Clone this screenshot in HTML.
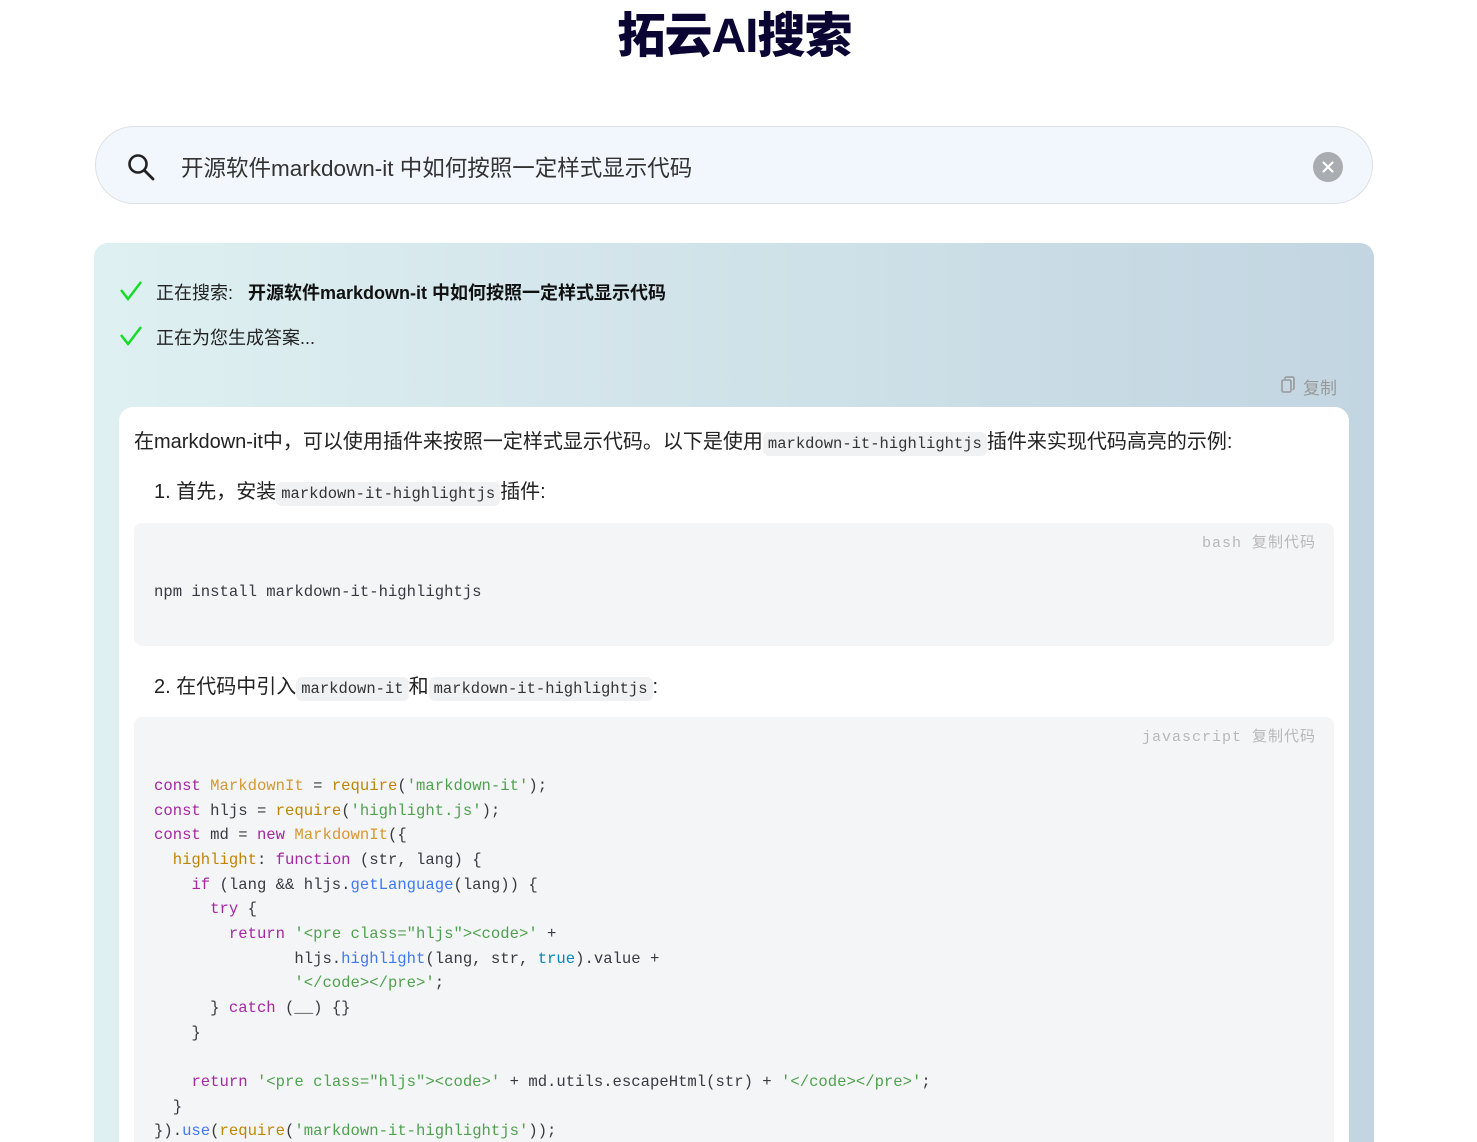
<!DOCTYPE html>
<html style="overflow:hidden;height:1142px"><head><meta charset="utf-8">
<style>
*{margin:0;padding:0;box-sizing:border-box}
body{width:1477px;height:1142px;overflow:hidden;background:#fff;font-family:"Liberation Sans","Noto Sans CJK SC",sans-serif;position:relative;color:#222}
.abs{position:absolute}
h1{position:absolute;left:0;width:1469px;text-align:center;top:-4px;font-size:48px;font-weight:900;color:#0b0533;letter-spacing:-1px}
.search{left:95px;top:126px;width:1278px;height:78px;border:1px solid #dcdfe3;border-radius:40px;background:#f2f7fd}
.search .q{position:absolute;left:85px;top:24px;font-size:22.5px;color:#333}
.clear{position:absolute;left:1217px;top:25px;width:30px;height:30px;border-radius:50%;background:#a9acb0}
.panel{left:94px;top:243px;width:1280px;height:899px;border-radius:14px 14px 0 0;background:linear-gradient(90deg,#def0f1 0%,#c2d5e1 100%);overflow:hidden}
.st{position:absolute;left:62px;font-size:18px;color:#222}
.card{left:119px;top:407px;width:1230px;height:735px;background:#fff;border-radius:14px 14px 0 0;overflow:hidden}
.p{position:absolute;font-size:20px;color:#222;white-space:nowrap}
code.i{font-family:"Liberation Mono",monospace;font-size:15.5px;background:#f0f1f3;border-radius:6px;padding:3px 5px;color:#333}
.cb{position:absolute;left:15px;width:1200px;background:#f4f5f7;border-radius:8px}
.lang{position:absolute;right:18px;top:8px;font-family:"Liberation Mono","Noto Sans CJK SC",monospace;font-size:15px;color:#b8b8b8;letter-spacing:1px}
pre{position:absolute;left:20px;font-family:"Liberation Mono",monospace;font-size:15.6px;line-height:24.65px;color:#383a42}
.k{color:#a626a4}.s{color:#50a14f}.b{color:#c18401}.t{color:#d7962f}.f{color:#4078f2}.l{color:#0184bb}
</style></head><body>
<h1>拓云AI搜索</h1>
<div class="abs search">
<svg style="position:absolute;left:30px;top:25px" width="30" height="30" viewBox="0 0 30 30"><circle cx="12" cy="12" r="8.5" fill="none" stroke="#222" stroke-width="2.6"/><line x1="18.5" y1="18.5" x2="27" y2="27" stroke="#222" stroke-width="2.8" stroke-linecap="round"/></svg>
<div class="q">开源软件markdown-it 中如何按照一定样式显示代码</div>
<div class="clear"><svg width="30" height="30" viewBox="0 0 30 30"><path d="M10.5 10.5L19.5 19.5M19.5 10.5L10.5 19.5" stroke="#fff" stroke-width="2.2" stroke-linecap="round"/></svg></div>
</div>
<div class="abs panel">
<svg style="position:absolute;left:25px;top:37px" width="24" height="22" viewBox="0 0 24 22"><path d="M2 10L9 19L22 2" fill="none" stroke="#11dd22" stroke-width="2.4"/></svg>
<div class="st" style="top:36px">正在搜索:&nbsp;&nbsp;&nbsp;<b style="color:#111">开源软件markdown-it 中如何按照一定样式显示代码</b></div>
<svg style="position:absolute;left:25px;top:82px" width="24" height="22" viewBox="0 0 24 22"><path d="M2 10L9 19L22 2" fill="none" stroke="#11dd22" stroke-width="2.4"/></svg>
<div class="st" style="top:81px">正在为您生成答案...</div>
<svg style="position:absolute;left:1186px;top:133px" width="16" height="18" viewBox="0 0 16 18"><rect x="2" y="4" width="9" height="12" rx="1.5" fill="none" stroke="#999" stroke-width="1.6"/><path d="M5 3V2.5C5 1.7 5.7 1 6.5 1H12.5C13.3 1 14 1.7 14 2.5V12C14 12.8 13.3 13.5 12.5 13.5" fill="none" stroke="#999" stroke-width="1.6"/></svg>
<div style="position:absolute;left:1209px;top:131px;font-size:17px;color:#999">复制</div>
</div>
<div class="abs card">
<div class="p" style="left:15px;top:18px">在markdown-it中，可以使用插件来按照一定样式显示代码。以下是使用<code class="i">markdown-it-highlightjs</code>插件来实现代码高亮的示例:</div>
<div class="p" style="left:35px;top:68px">1. 首先，安装<code class="i">markdown-it-highlightjs</code>插件:</div>
<div class="cb" style="top:116px;height:123px"><div class="lang">bash 复制代码</div>
<pre style="top:57px">npm install markdown-it-highlightjs</pre></div>
<div class="p" style="left:35px;top:263px">2. 在代码中引入<code class="i">markdown-it</code>和<code class="i">markdown-it-highlightjs</code>:</div>
<div class="cb" style="top:310px;height:425px;border-radius:8px 8px 0 0;overflow:hidden"><div class="lang">javascript 复制代码</div>
<pre style="top:57px"><span class="k">const</span> <span class="t">MarkdownIt</span> = <span class="b">require</span>(<span class="s">'markdown-it'</span>);
<span class="k">const</span> hljs = <span class="b">require</span>(<span class="s">'highlight.js'</span>);
<span class="k">const</span> md = <span class="k">new</span> <span class="t">MarkdownIt</span>({
  <span class="b">highlight</span>: <span class="k">function</span> (str, lang) {
    <span class="k">if</span> (lang &amp;&amp; hljs.<span class="f">getLanguage</span>(lang)) {
      <span class="k">try</span> {
        <span class="k">return</span> <span class="s">'&lt;pre class="hljs"&gt;&lt;code&gt;'</span> +
               hljs.<span class="f">highlight</span>(lang, str, <span class="l">true</span>).value +
               <span class="s">'&lt;/code&gt;&lt;/pre&gt;'</span>;
      } <span class="k">catch</span> (__) {}
    }

    <span class="k">return</span> <span class="s">'&lt;pre class="hljs"&gt;&lt;code&gt;'</span> + md.utils.escapeHtml(str) + <span class="s">'&lt;/code&gt;&lt;/pre&gt;'</span>;
  }
}).<span class="f">use</span>(<span class="b">require</span>(<span class="s">'markdown-it-highlightjs'</span>));</pre></div>
</div>
</body></html>
